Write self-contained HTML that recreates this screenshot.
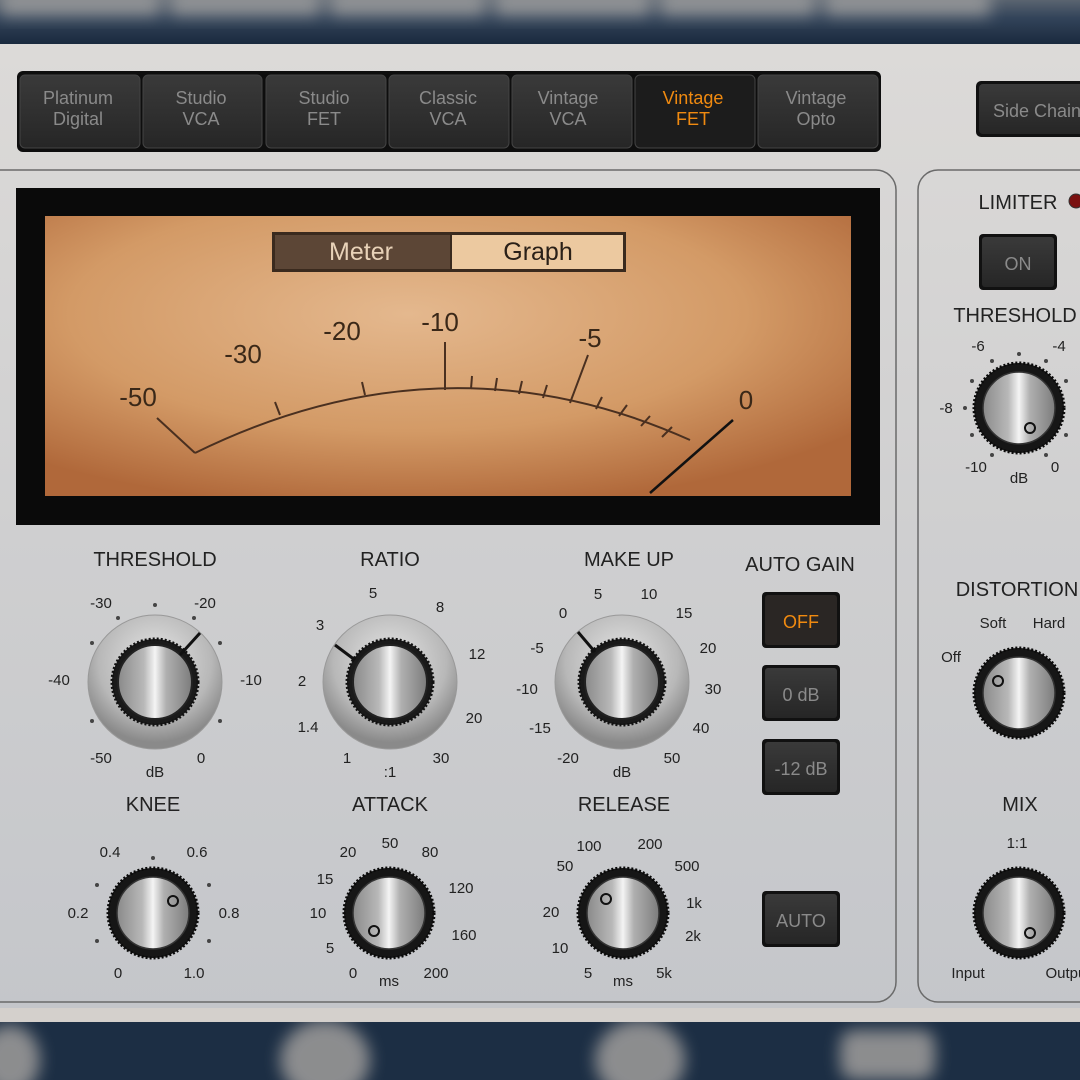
<!DOCTYPE html>
<html><head><meta charset="utf-8"><style>
html,body{margin:0;padding:0;width:1080px;height:1080px;overflow:hidden;background:#1c2c40}
svg{display:block}
text{font-family:"Liberation Sans",sans-serif}
</style></head><body>
<svg width="1080" height="1080" viewBox="0 0 1080 1080" xmlns="http://www.w3.org/2000/svg">
<defs>
<filter id="blur" x="-0.2" y="-0.5" width="1.4" height="2"><feGaussianBlur stdDeviation="8"/></filter>
<linearGradient id="topband" x1="0" y1="0" x2="0" y2="1"><stop offset="0" stop-color="#5a6470"/><stop offset="0.4" stop-color="#33445a"/><stop offset="1" stop-color="#1a2a3e"/></linearGradient>
<linearGradient id="panel" x1="0" y1="0" x2="0" y2="1"><stop offset="0" stop-color="#dcdad8"/><stop offset="0.5" stop-color="#cfcfd0"/><stop offset="1" stop-color="#c4c6ca"/></linearGradient>
<radialGradient id="meter" cx="0.45" cy="0.35" r="0.7"><stop offset="0" stop-color="#e4b88e"/><stop offset="0.6" stop-color="#d39a66"/><stop offset="1" stop-color="#b0683a"/></radialGradient>
<radialGradient id="bezel" cx="0.5" cy="0.35" r="0.6"><stop offset="0" stop-color="#e6e6e6"/><stop offset="0.7" stop-color="#b8b8b8"/><stop offset="1" stop-color="#8a8a8a"/></radialGradient>
<linearGradient id="metal" x1="0" y1="0" x2="1" y2="0"><stop offset="0" stop-color="#8a8a8a"/><stop offset="0.35" stop-color="#b8b8b8"/><stop offset="0.5" stop-color="#f4f4f4"/><stop offset="0.65" stop-color="#b0b0b0"/><stop offset="1" stop-color="#7c7c7c"/></linearGradient>
<g id="bigknob">
<circle r="67" fill="url(#bezel)" stroke="#999" stroke-width="1"/>
<circle r="43" fill="#1a1a1a" stroke="#111" stroke-width="3" stroke-dasharray="2 2"/>
<circle r="37" fill="url(#metal)" stroke="#222" stroke-width="2"/>
</g>
<g id="smallknob">
<circle r="45" fill="#161616" stroke="#0a0a0a" stroke-width="3" stroke-dasharray="2 2"/>
<circle r="36" fill="url(#metal)" stroke="#333" stroke-width="1.5"/>
</g>
<linearGradient id="btn" x1="0" y1="0" x2="0" y2="1"><stop offset="0" stop-color="#3a3a3a"/><stop offset="1" stop-color="#262626"/></linearGradient>
</defs>
<rect width="1080" height="44" fill="url(#topband)"/>
<g fill="#a0a0a0" opacity="0.8" filter="url(#blur)"><rect x="0" y="-10" width="160" height="26"/><rect x="170" y="-10" width="150" height="26"/><rect x="330" y="-10" width="155" height="26"/><rect x="495" y="-10" width="155" height="26"/><rect x="660" y="-10" width="155" height="26"/><rect x="825" y="-10" width="165" height="26"/></g>
<rect y="1022" width="1080" height="58" fill="#1c2e44"/>
<g fill="#a09e9c" opacity="0.85" filter="url(#blur)"><ellipse cx="10" cy="1060" rx="30" ry="35"/><ellipse cx="325" cy="1060" rx="45" ry="40"/><ellipse cx="640" cy="1060" rx="45" ry="40"/><rect x="840" y="1030" width="95" height="50" rx="14"/></g>
<rect y="44" width="1080" height="978" fill="url(#panel)"/>
<rect y="1008" width="1080" height="14" fill="#d4d0cc"/>

<rect x="17" y="71" width="864" height="81" rx="6" fill="#0e0e0e"/>
<g fill="url(#btn)" stroke="#444" stroke-width="1">
<rect x="20" y="75" width="120" height="73" rx="5"/><rect x="143" y="75" width="119" height="73" rx="5"/><rect x="266" y="75" width="120" height="73" rx="5"/><rect x="389" y="75" width="120" height="73" rx="5"/><rect x="512" y="75" width="120" height="73" rx="5"/><rect x="635" y="75" width="120" height="73" rx="5" fill="#1c1c1c"/><rect x="758" y="75" width="120" height="73" rx="5"/>
</g>
<g font-size="18" fill="#8a8a8a" text-anchor="middle">
<text x="78" y="104">Platinum</text><text x="78" y="125">Digital</text>
<text x="201" y="104">Studio</text><text x="201" y="125">VCA</text>
<text x="324" y="104">Studio</text><text x="324" y="125">FET</text>
<text x="448" y="104">Classic</text><text x="448" y="125">VCA</text>
<text x="568" y="104">Vintage</text><text x="568" y="125">VCA</text>
<text x="693" y="104" fill="#f08a10">Vintage</text><text x="693" y="125" fill="#f08a10">FET</text>
<text x="816" y="104">Vintage</text><text x="816" y="125">Opto</text>
</g>
<rect x="976" y="81" width="120" height="56" rx="5" fill="#111"/>
<rect x="979" y="84" width="115" height="50" rx="4" fill="url(#btn)"/>
<text x="993" y="117" font-size="18" fill="#8a8a8a">Side Chain</text>

<rect x="-20" y="170" width="916" height="832" rx="20" fill="none" stroke="#6a6a6a" stroke-width="1.5"/>
<rect x="918" y="170" width="200" height="832" rx="20" fill="none" stroke="#6a6a6a" stroke-width="1.5"/>

<rect x="16" y="188" width="864" height="337" fill="#0a0a0a"/>
<rect x="45" y="216" width="806" height="280" fill="url(#meter)"/>
<rect x="272" y="232" width="354" height="40" fill="#3a2a1e"/>
<rect x="275" y="235" width="175" height="34" fill="#5c4636"/>
<rect x="452" y="235" width="171" height="34" fill="#ecc9a0"/>
<text x="361" y="260" font-size="25" fill="#e8d2b8" text-anchor="middle">Meter</text>
<text x="538" y="260" font-size="25" fill="#2a2018" text-anchor="middle">Graph</text>
<g stroke="#4a3020" stroke-width="2" fill="none">
<path d="M157 418 L195 453"/>
<path d="M195 453 Q445 330 690 440"/>
<path d="M445 342 L445 390"/><path d="M588 355 L570 403"/>
<path d="M275 402 L280 415"/><path d="M362 382 L365 395"/>
<path d="M472 376 L471 389"/><path d="M497 378 L495 391"/><path d="M522 381 L519 394"/><path d="M547 385 L543 398"/><path d="M602 397 L596 409"/><path d="M627 405 L619 416"/><path d="M650 416 L641 426"/><path d="M672 427 L662 437"/>
</g>
<path d="M650 493 L733 420" stroke="#111" stroke-width="2.5"/>
<g font-size="26" fill="#3a2818" text-anchor="middle">
<text x="138" y="406">-50</text><text x="243" y="363">-30</text><text x="342" y="340">-20</text><text x="440" y="331">-10</text><text x="590" y="347">-5</text><text x="746" y="409">0</text>
</g>

<g font-size="20" fill="#222" text-anchor="middle">
<text x="155" y="566">THRESHOLD</text><text x="390" y="566">RATIO</text><text x="629" y="566">MAKE UP</text><text x="800" y="571">AUTO GAIN</text>
<text x="153" y="811">KNEE</text><text x="390" y="811">ATTACK</text><text x="624" y="811">RELEASE</text>
<text x="1018" y="209">LIMITER</text><text x="1015" y="322">THRESHOLD</text><text x="1017" y="596">DISTORTION</text><text x="1020" y="811">MIX</text>
</g>
<circle cx="1076" cy="201" r="7" fill="#7a1010" stroke="#333"/>

<use href="#bigknob" x="155" y="682"/><path d="M180 655 L200 633" stroke="#111" stroke-width="3"/>
<use href="#bigknob" x="390" y="682"/><path d="M355 660 L335 645" stroke="#111" stroke-width="3"/>
<use href="#bigknob" x="622" y="682"/><path d="M595 652 L578 632" stroke="#111" stroke-width="3"/>
<use href="#smallknob" x="153" y="913"/><circle cx="173" cy="901" r="5" fill="none" stroke="#111" stroke-width="2"/>
<use href="#smallknob" x="389" y="913"/><circle cx="374" cy="931" r="5" fill="none" stroke="#111" stroke-width="2"/>
<use href="#smallknob" x="623" y="913"/><circle cx="606" cy="899" r="5" fill="none" stroke="#111" stroke-width="2"/>
<use href="#smallknob" x="1019" y="408"/><circle cx="1030" cy="428" r="5" fill="none" stroke="#111" stroke-width="2"/>
<use href="#smallknob" x="1019" y="693"/><circle cx="998" cy="681" r="5" fill="none" stroke="#111" stroke-width="2"/>
<use href="#smallknob" x="1019" y="913"/><circle cx="1030" cy="933" r="5" fill="none" stroke="#111" stroke-width="2"/>

<g font-size="15" fill="#222" text-anchor="middle">
<text x="101" y="608">-30</text><text x="205" y="608">-20</text><text x="59" y="685">-40</text><text x="251" y="685">-10</text><text x="101" y="763">-50</text><text x="201" y="763">0</text><text x="155" y="777">dB</text>
<text x="373" y="598">5</text><text x="440" y="612">8</text><text x="320" y="630">3</text><text x="477" y="659">12</text><text x="302" y="686">2</text><text x="474" y="723">20</text><text x="308" y="732">1.4</text><text x="347" y="763">1</text><text x="441" y="763">30</text><text x="390" y="777">:1</text>
<text x="563" y="618">0</text><text x="598" y="599">5</text><text x="649" y="599">10</text><text x="684" y="618">15</text><text x="537" y="653">-5</text><text x="708" y="653">20</text><text x="527" y="694">-10</text><text x="713" y="694">30</text><text x="540" y="733">-15</text><text x="701" y="733">40</text><text x="568" y="763">-20</text><text x="672" y="763">50</text><text x="622" y="777">dB</text>
<text x="110" y="857">0.4</text><text x="197" y="857">0.6</text><text x="78" y="918">0.2</text><text x="229" y="918">0.8</text><text x="118" y="978">0</text><text x="194" y="978">1.0</text>
<text x="348" y="857">20</text><text x="390" y="848">50</text><text x="430" y="857">80</text><text x="325" y="884">15</text><text x="461" y="893">120</text><text x="318" y="918">10</text><text x="464" y="940">160</text><text x="330" y="953">5</text><text x="353" y="978">0</text><text x="436" y="978">200</text><text x="389" y="986">ms</text>
<text x="589" y="851">100</text><text x="650" y="849">200</text><text x="565" y="871">50</text><text x="687" y="871">500</text><text x="551" y="917">20</text><text x="694" y="908">1k</text><text x="560" y="953">10</text><text x="693" y="941">2k</text><text x="588" y="978">5</text><text x="664" y="978">5k</text><text x="623" y="986">ms</text>
<text x="978" y="351">-6</text><text x="1059" y="351">-4</text><text x="946" y="413">-8</text><text x="976" y="472">-10</text><text x="1055" y="472">0</text><text x="1019" y="483">dB</text>
<text x="993" y="628">Soft</text><text x="1049" y="628">Hard</text><text x="951" y="662">Off</text>
<text x="1017" y="848">1:1</text><text x="968" y="978">Input</text><text x="1068" y="978">Output</text>
</g>
<g fill="#444">
<circle cx="155" cy="605" r="2"/><circle cx="92" cy="643" r="2"/><circle cx="220" cy="643" r="2"/><circle cx="92" cy="721" r="2"/><circle cx="220" cy="721" r="2"/><circle cx="118" cy="618" r="2"/><circle cx="194" cy="618" r="2"/>
<circle cx="153" cy="858" r="2"/><circle cx="97" cy="885" r="2"/><circle cx="209" cy="885" r="2"/><circle cx="97" cy="941" r="2"/><circle cx="209" cy="941" r="2"/>
<circle cx="1019" cy="354" r="2"/><circle cx="992" cy="361" r="2"/><circle cx="1046" cy="361" r="2"/><circle cx="972" cy="381" r="2"/><circle cx="1066" cy="381" r="2"/><circle cx="965" cy="408" r="2"/><circle cx="972" cy="435" r="2"/><circle cx="1066" cy="435" r="2"/><circle cx="992" cy="455" r="2"/><circle cx="1046" cy="455" r="2"/>
</g>

<g fill="#111"><rect x="762" y="592" width="78" height="56" rx="4"/><rect x="762" y="665" width="78" height="56" rx="4"/><rect x="762" y="739" width="78" height="56" rx="4"/><rect x="762" y="891" width="78" height="56" rx="4"/><rect x="979" y="234" width="78" height="56" rx="4"/></g>
<rect x="765" y="595" width="72" height="50" rx="3" fill="#2a2624"/>
<g fill="url(#btn)"><rect x="765" y="668" width="72" height="50" rx="3"/><rect x="765" y="742" width="72" height="50" rx="3"/><rect x="765" y="894" width="72" height="50" rx="3"/><rect x="982" y="237" width="72" height="50" rx="3"/></g>
<g font-size="18" text-anchor="middle" fill="#8a8a8a">
<text x="801" y="628" fill="#f08a10">OFF</text><text x="801" y="701">0 dB</text><text x="801" y="775">-12 dB</text><text x="801" y="927">AUTO</text><text x="1018" y="270">ON</text>
</g>
</svg>
</body></html>
